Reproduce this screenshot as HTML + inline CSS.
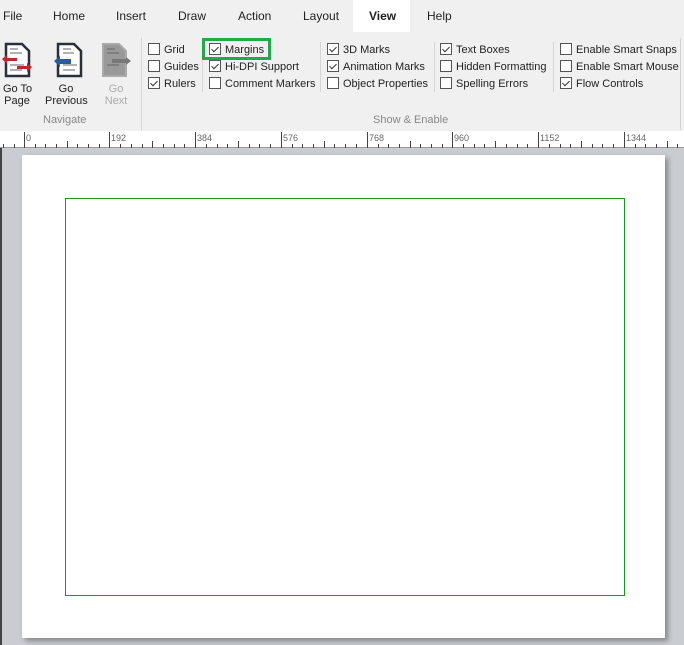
<!DOCTYPE html><html><head><style>
*{margin:0;padding:0;box-sizing:border-box}
body{width:684px;height:645px;overflow:hidden;font-family:"Liberation Sans",sans-serif;background:#c9ccd1;position:relative;font-size:11px;color:#222}
.a{position:absolute;white-space:nowrap}
.tab{top:9px;font-size:12px;color:#222}
.cb{position:absolute;width:12px;height:12px;border:1px solid #555;background:#fff}
.cb.c::after{content:"";position:absolute;left:3px;top:1px;width:3px;height:6px;border:solid #333;border-width:0 1px 1px 0;transform:rotate(45deg)}
.sep{position:absolute;width:1px;background:#d4d4d4}
.t{position:absolute;white-space:nowrap;margin-top:1px}
</style></head><body>
<div class="a" style="left:0;top:0;width:684px;height:131px;background:#f0f0f0"></div>
<div class="a" style="left:353px;top:0;width:57px;height:32px;background:#fff"></div>
<div class="a tab" style="left:3px">File</div>
<div class="a tab" style="left:53px">Home</div>
<div class="a tab" style="left:116px">Insert</div>
<div class="a tab" style="left:178px">Draw</div>
<div class="a tab" style="left:238px">Action</div>
<div class="a tab" style="left:303px">Layout</div>
<div class="a tab" style="left:369px;font-weight:bold">View</div>
<div class="a tab" style="left:427px">Help</div>

<svg class="a" style="left:0;top:40px" width="140" height="40" viewBox="0 0 140 40">
<path d="M6 4h16l7 7v25H6z" fill="#fff" stroke="#2a2f3a" stroke-width="2.5"/><path d="M10 9h8M10 13h12M10 25h14M10 30h12" stroke="#999" stroke-width="1.5"/>
<path d="M2 19l5-4v3h10v3H7v3z" fill="#c0282d"/><path d="M32 27l-5-4v3H17v3h10v3z" fill="#c0282d"/>
<path d="M58 4h16l7 7v25H58z" fill="#fff" stroke="#2a2f3a" stroke-width="2.5"/><path d="M63 9h8M63 13h11M63 25h14M63 30h12" stroke="#999" stroke-width="1.5"/>
<path d="M54 21l6-5v3h11v5H60v3z" fill="#2b5a9a"/>
<path d="M103 4h16l7 7v25h-23z" fill="#999" stroke="#aaa" stroke-width="2"/><path d="M107 9h8M107 13h12M107 25h12" stroke="#777" stroke-width="1.5"/><path d="M131 21l-5-4v2h-14v4h14v2z" fill="#777"/>
</svg>
<div class="a" style="left:3px;top:83px;text-align:center;width:28px;line-height:12px">Go To<br>Page</div>
<div class="a" style="left:45px;top:83px;text-align:center;width:42px;line-height:12px">Go<br>Previous</div>
<div class="a" style="left:102px;top:83px;text-align:center;width:28px;line-height:12px;color:#aaa">Go<br>Next</div>
<div class="a" style="left:43px;top:114px;color:#888">Navigate</div>
<div class="sep" style="left:141px;top:38px;height:92px"></div>

<div class="cb" style="left:148px;top:43px"></div><div class="t" style="left:164px;top:43px">Grid</div>
<div class="cb" style="left:148px;top:60px"></div><div class="t" style="left:164px;top:60px">Guides</div>
<div class="cb c" style="left:148px;top:77px"></div><div class="t" style="left:164px;top:77px">Rulers</div>
<div class="sep" style="left:202px;top:42px;height:50px"></div>
<div class="a" style="left:202px;top:38px;width:69px;height:22px;border:3px solid #22aa4a"></div>
<div class="cb c" style="left:209px;top:43px"></div><div class="t" style="left:225px;top:43px">Margins</div>
<div class="cb c" style="left:209px;top:60px"></div><div class="t" style="left:225px;top:60px">Hi-DPI Support</div>
<div class="cb" style="left:209px;top:77px"></div><div class="t" style="left:225px;top:77px">Comment Markers</div>
<div class="sep" style="left:320px;top:42px;height:50px"></div>
<div class="cb c" style="left:327px;top:43px"></div><div class="t" style="left:343px;top:43px">3D Marks</div>
<div class="cb c" style="left:327px;top:60px"></div><div class="t" style="left:343px;top:60px">Animation Marks</div>
<div class="cb" style="left:327px;top:77px"></div><div class="t" style="left:343px;top:77px">Object Properties</div>
<div class="sep" style="left:434px;top:42px;height:50px"></div>
<div class="cb c" style="left:440px;top:43px"></div><div class="t" style="left:456px;top:43px">Text Boxes</div>
<div class="cb" style="left:440px;top:60px"></div><div class="t" style="left:456px;top:60px">Hidden Formatting</div>
<div class="cb" style="left:440px;top:77px"></div><div class="t" style="left:456px;top:77px">Spelling Errors</div>
<div class="sep" style="left:553px;top:42px;height:50px"></div>
<div class="cb" style="left:560px;top:43px"></div><div class="t" style="left:576px;top:43px">Enable Smart Snaps</div>
<div class="cb" style="left:560px;top:60px"></div><div class="t" style="left:576px;top:60px">Enable Smart Mouse</div>
<div class="cb c" style="left:560px;top:77px"></div><div class="t" style="left:576px;top:77px">Flow Controls</div>
<div class="a" style="left:373px;top:114px;color:#888">Show &amp; Enable</div>
<div class="sep" style="left:680px;top:38px;height:92px"></div>

<svg class="a" style="left:0;top:131px" width="684" height="17">
<rect width="684" height="17" fill="#fff"/><line x1="0" y1="16.5" x2="684" y2="16.5" stroke="#999"/>
<g font-family="Liberation Sans" font-size="9" fill="#666">
<text x="26" y="10">0</text><text x="111" y="10">192</text><text x="197" y="10">384</text><text x="283" y="10">576</text><text x="369" y="10">768</text><text x="454" y="10">960</text><text x="540" y="10">1152</text><text x="626" y="10">1344</text></g>
<path stroke="#444" d="M24.5 1v16M109.5 1v16M195.5 1v16M281.5 1v16M367.5 1v16M452.5 1v16M538.5 1v16M624.5 1v16
M3.5 13v4M14.5 13v4M35.5 13v4M45.5 13v4M56.5 13v4M67.5 10v7M77.5 13v4M88.5 13v4M99.5 13v4
M120.5 13v4M131.5 13v4M142.5 13v4M152.5 10v7M163.5 13v4M174.5 13v4M184.5 13v4
M206.5 13v4M217.5 13v4M227.5 13v4M238.5 10v7M249.5 13v4M259.5 13v4M270.5 13v4
M292.5 13v4M302.5 13v4M313.5 13v4M324.5 10v7M334.5 13v4M345.5 13v4M356.5 13v4
M378.5 13v4M388.5 13v4M399.5 13v4M410.5 10v7M420.5 13v4M431.5 13v4M442.5 13v4
M463.5 13v4M474.5 13v4M484.5 13v4M495.5 10v7M506.5 13v4M517.5 13v4M527.5 13v4
M549.5 13v4M560.5 13v4M570.5 13v4M581.5 10v7M592.5 13v4M602.5 13v4M613.5 13v4
M635.5 13v4M645.5 13v4M656.5 13v4M667.5 10v7M677.5 13v4"/>
</svg>
<div class="a" style="left:0;top:148px;width:2px;height:497px;background:#444"></div>
<div class="a" style="left:22px;top:155px;width:643px;height:483px;background:#fff;box-shadow:3px 3px 5px rgba(0,0,0,.35)"></div>
<div class="a" style="left:65px;top:198px;width:560px;height:398px;border:1px solid #1a9a1a"></div>
</body></html>
